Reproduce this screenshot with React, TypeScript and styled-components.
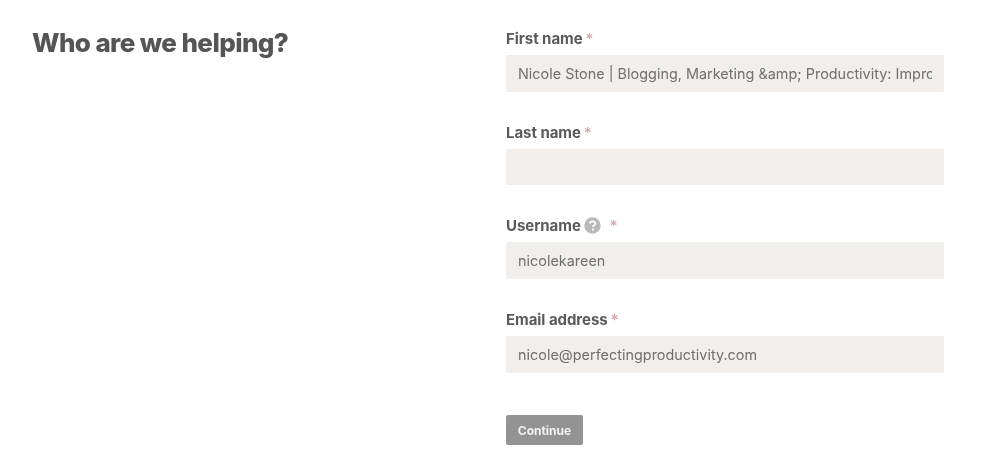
import styled, { createGlobalStyle } from 'styled-components';

const GlobalStyle = createGlobalStyle`
  html, body {
    margin: 0;
    padding: 0;
    background: #ffffff;
  }
  body {
    font-family: Inter, "Liberation Sans", Arial, sans-serif;
  }
`;

const fields = [
  { id: 'first', label: 'First name', value: 'Nicole Stone | Blogging, Marketing &amp; Productivity: Improve your life' },
  { id: 'last', label: 'Last name', value: '', short: true },
  { id: 'username', label: 'Username', value: 'nicolekareen', help: true },
  { id: 'email', label: 'Email address', value: 'nicole@perfectingproductivity.com' },
];

const HelpIcon = () => (
  <svg width="17" height="17" viewBox="0 0 17 17" aria-hidden="true">
    <circle cx="8.5" cy="8.5" r="8.2" fill="#b9b9b9" />
    <path
      d="M5.9 6.6c.1-1.5 1.2-2.3 2.7-2.3s2.6.8 2.6 2.1c0 1-.6 1.5-1.3 2-.6.4-.9.7-.9 1.4v.3"
      fill="none"
      stroke="#ffffff"
      strokeWidth="1.7"
    />
    <circle cx="8.9" cy="12.6" r="1.1" fill="#ffffff" />
  </svg>
);

const App = () => {
  return (
    <Page>
      <GlobalStyle />
      <Title>Who are we helping?</Title>
      <Form>
        {fields.map((field) => (
          <Field key={field.id}>
            <Label htmlFor={field.id}>
              {field.label}
              {field.help && (
                <HelpWrapper>
                  <HelpIcon />
                </HelpWrapper>
              )}
              <Required $spaced={field.help}>*</Required>
            </Label>
            <Input id={field.id} type="text" readOnly value={field.value} $short={field.short} />
          </Field>
        ))}
        <SubmitButton type="button">Continue</SubmitButton>
      </Form>
    </Page>
  );
};

export default App;

const Page = styled.div`
  display: grid;
  grid-template-columns: 506px 438px;
  align-items: start;
  width: 1008px;
  height: 469px;
  overflow: hidden;
  background: #ffffff;
  filter: blur(0.35px);
`;

const Title = styled.h1`
  margin: 27px 0 0 32px;
  font-size: 26px;
  line-height: 32px;
  font-weight: 800;
  letter-spacing: -0.6px;
  color: #555555;
`;

const Form = styled.form`
  display: flex;
  flex-direction: column;
  gap: 30px;
  padding-top: 28px;
`;

const Field = styled.div`
  display: flex;
  flex-direction: column;
  gap: 7px;
`;

const Label = styled.label`
  display: flex;
  align-items: center;
  box-sizing: border-box;
  height: 20px;
  font-size: 15px;
  font-weight: 700;
  letter-spacing: -0.05px;
  color: #5a5a5a;
`;

const HelpWrapper = styled.span`
  display: flex;
  margin-left: 3px;
`;

const Required = styled.span<{ $spaced?: boolean }>`
  margin-left: ${(props) => (props.$spaced ? '9px' : '3px')};
  font-weight: 500;
  color: #d4a5a5;
`;

const Input = styled.input<{ $short?: boolean }>`
  box-sizing: border-box;
  width: 100%;
  height: ${(props) => (props.$short ? '36px' : '37px')};
  padding: 0 12px;
  border: 0;
  border-radius: 2px;
  outline: none;
  background: #f1eeeb;
  font-family: inherit;
  font-size: 14.4px;
  letter-spacing: 0.02px;
  color: #707070;
`;

const SubmitButton = styled.button`
  align-self: flex-start;
  width: 77px;
  height: 30px;
  margin-top: 12px;
  padding: 0;
  border: 0;
  border-radius: 2px;
  background: #939393;
  font-family: inherit;
  font-size: 12px;
  font-weight: 700;
  color: #f3f3f3;
`;
